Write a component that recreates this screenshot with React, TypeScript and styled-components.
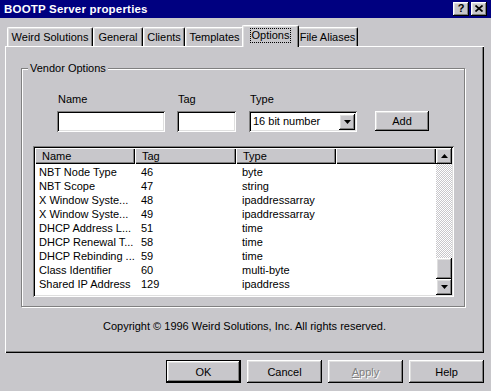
import styled, { createGlobalStyle } from "styled-components";

const FACE = "#c8c7cb";
const LIGHT = "#dfdfdf";
const SHADOW = "#808080";

const GlobalStyle = createGlobalStyle`
  html, body {
    margin: 0;
    padding: 0;
    background: ${FACE};
  }
  * {
    box-sizing: border-box;
  }
`;

const raised = `
  box-shadow: inset -1px -1px #000, inset 1px 1px #fff,
    inset -2px -2px ${SHADOW}, inset 2px 2px ${LIGHT};
`;

const sunken = `
  box-shadow: inset 1px 1px ${SHADOW}, inset -1px -1px #fff,
    inset 2px 2px #000, inset -2px -2px ${LIGHT};
`;

const Window = styled.div`
  width: 491px;
  height: 391px;
  background: ${FACE};
  display: flex;
  flex-direction: column;
  font-family: "Liberation Sans", Arial, sans-serif;
  font-size: 11px;
  color: #000;
  overflow: hidden;
`;

const TitleBar = styled.div`
  height: 18px;
  background: #000080;
  color: #fff;
  display: flex;
  align-items: center;
  padding: 0 4px 0 4px;
  gap: 2px;
`;

const TitleText = styled.div`
  flex: 1;
  font-weight: bold;
  font-size: 11.5px;
  letter-spacing: 0.2px;
`;

const CaptionButton = styled.div`
  width: 16px;
  height: 14px;
  background: ${FACE};
  ${raised}
  display: flex;
  align-items: center;
  justify-content: center;
  color: #000;
  font-weight: bold;
  font-size: 11px;
  line-height: 1;
  padding-bottom: 1px;
`;

const Body = styled.div`
  padding: 7px 0 0 5px;
  display: flex;
  flex-direction: column;
`;

const TabStrip = styled.div`
  height: 21px;
  display: flex;
  align-items: flex-end;
  padding-left: 2px;
  position: relative;
  z-index: 1;
`;

const Tab = styled.div<{ $width: number; $active?: boolean }>`
  width: ${(p) => p.$width + (p.$active ? 4 : 0)}px;
  height: ${(p) => (p.$active ? 22 : 19)}px;
  margin: ${(p) => (p.$active ? "0 -2px -1px" : "0")};
  position: relative;
  z-index: ${(p) => (p.$active ? 2 : 1)};
  background: ${FACE};
  border-top: 1px solid #fff;
  border-left: 1px solid #fff;
  border-right: 1px solid #000;
  border-radius: 2px 2px 0 0;
  box-shadow: inset -1px 0 ${SHADOW}, inset 1px 1px ${LIGHT};
  display: flex;
  align-items: center;
  justify-content: center;
  padding-bottom: ${(p) => (p.$active ? 3 : 0)}px;
  white-space: nowrap;
`;

const FocusLabel = styled.span`
  outline: 1px dotted #000;
  outline-offset: 0;
  padding: 0 1px;
  line-height: 13px;
`;

const TabPanel = styled.div`
  width: 479px;
  height: 307px;
  background: ${FACE};
  box-shadow: inset 1px 1px #fff, inset -1px -1px #000,
    inset -2px -2px ${SHADOW};
  padding-top: 22px;
  display: flex;
  flex-direction: column;
`;

const GroupBox = styled.div`
  position: relative;
  width: 444px;
  height: 239px;
  margin-left: 16px;
  border: 1px solid ${SHADOW};
  box-shadow: inset 1px 1px #fff, 1px 1px #fff;
  padding: 23px 0 0 11px;
`;

const GroupLegend = styled.span`
  position: absolute;
  top: -7px;
  left: 6px;
  padding: 0 2px;
  background: ${FACE};
  line-height: 13px;
`;

const FormGrid = styled.div`
  display: grid;
  grid-template-columns: 108px 60px 108px 54px;
  grid-template-rows: 14px 21px;
  column-gap: 12px;
  row-gap: 5px;
  margin-left: 24px;
`;

const FieldLabel = styled.label`
  line-height: 14px;
  padding-left: 1px;
`;

const TextInput = styled.div<{ $width: number }>`
  width: ${(p) => p.$width}px;
  height: 21px;
  background: #fff;
  ${sunken}
`;

const Select = styled.div`
  height: 21px;
  background: #fff;
  ${sunken}
  display: flex;
  align-items: center;
  padding: 2px 2px 2px 4px;
`;

const SelectValue = styled.span`
  flex: 1;
  line-height: 17px;
`;

const ArrowButton = styled.div<{ $height?: number }>`
  width: 16px;
  height: ${(p) => p.$height ?? 16}px;
  flex: none;
  background: ${FACE};
  ${raised}
  display: flex;
  align-items: center;
  justify-content: center;
`;

const PushButton = styled.button<{ $default?: boolean; $w: number; $h: number }>`
  width: ${(p) => p.$w}px;
  height: ${(p) => p.$h}px;
  margin: 0;
  padding: 0;
  background: ${FACE};
  font-family: inherit;
  font-size: 11px;
  color: #000;
  border: ${(p) => (p.$default ? "1px solid #000" : "none")};
  ${raised}
  &:disabled {
    color: ${SHADOW};
    text-shadow: 1px 1px #fff;
  }
`;

const AddButton = styled(PushButton)`
  margin-left: 6px;
`;

const ListView = styled.div`
  margin-top: 14px;
  width: 421px;
  height: 151px;
  background: #fff;
  ${sunken}
  padding: 2px;
  display: flex;
`;

const ListMain = styled.div`
  flex: 1;
  display: flex;
  flex-direction: column;
`;

const columns = "100px 101px 100px 1fr";

const HeaderRow = styled.div`
  display: grid;
  grid-template-columns: ${columns};
  height: 16px;
  margin-bottom: 1px;
`;

const HeaderCell = styled.div`
  background: ${FACE};
  box-shadow: inset 1px 1px #fff, inset -1px -1px #000,
    inset -2px -2px ${SHADOW};
  line-height: 16px;
  padding-left: 7px;
`;

const Row = styled.div`
  display: grid;
  grid-template-columns: ${columns};
  height: 14px;
  line-height: 14px;
  white-space: nowrap;
`;

const Cell = styled.div<{ $first?: boolean }>`
  padding-left: ${(p) => (p.$first ? 4 : 6)}px;
  overflow: hidden;
`;

const ScrollBar = styled.div`
  width: 16px;
  display: flex;
  flex-direction: column;
`;

const Track = styled.div`
  flex: 1;
  background-color: #fff;
  background-image: conic-gradient(
    ${FACE} 25%,
    #fff 0 50%,
    ${FACE} 0 75%,
    #fff 0
  );
  background-size: 2px 2px;
`;

const Thumb = styled.div`
  height: 21px;
  background: ${FACE};
  ${raised}
`;

const Copyright = styled.div`
  margin-top: 13px;
  text-align: center;
  line-height: 13px;
`;

const ButtonRow = styled.div`
  display: flex;
  justify-content: flex-end;
  gap: 6px;
  margin-top: 7px;
  padding-right: 7px;
`;

const Mnemonic = styled.span`
  text-decoration: underline;
`;

const Arrow = ({ up }: { up?: boolean }) => (
  <svg width="7" height="4" viewBox="0 0 7 4">
    <polygon points={up ? "3.5,0 7,4 0,4" : "0,0 7,0 3.5,4"} fill="#000" />
  </svg>
);

const CloseGlyph = () => (
  <svg width="8" height="7" viewBox="0 0 8 7">
    <path d="M0.5 0.5 L7.5 6.5 M7.5 0.5 L0.5 6.5" stroke="#000" strokeWidth="1.7" />
  </svg>
);

const tabs = [
  { label: "Weird Solutions", width: 86 },
  { label: "General", width: 50 },
  { label: "Clients", width: 42 },
  { label: "Templates", width: 59 },
  { label: "Options", width: 53, active: true },
  { label: "File Aliases", width: 61 },
];

const options = [
  ["NBT Node Type", "46", "byte"],
  ["NBT Scope", "47", "string"],
  ["X Window Syste...", "48", "ipaddressarray"],
  ["X Window Syste...", "49", "ipaddressarray"],
  ["DHCP Address L...", "51", "time"],
  ["DHCP Renewal T...", "58", "time"],
  ["DHCP Rebinding ...", "59", "time"],
  ["Class Identifier", "60", "multi-byte"],
  ["Shared IP Address", "129", "ipaddress"],
];

export default function App() {
  return (
    <>
      <GlobalStyle />
      <Window>
        <TitleBar>
          <TitleText>BOOTP Server properties</TitleText>
          <CaptionButton>?</CaptionButton>
          <CaptionButton>
            <CloseGlyph />
          </CaptionButton>
        </TitleBar>
        <Body>
          <TabStrip>
            {tabs.map((t) => (
              <Tab key={t.label} $width={t.width} $active={t.active}>
                {t.active ? <FocusLabel>{t.label}</FocusLabel> : t.label}
              </Tab>
            ))}
          </TabStrip>
          <TabPanel>
            <GroupBox>
              <GroupLegend>Vendor Options</GroupLegend>
              <FormGrid>
                <FieldLabel>Name</FieldLabel>
                <FieldLabel>Tag</FieldLabel>
                <FieldLabel>Type</FieldLabel>
                <span />
                <TextInput $width={108} />
                <TextInput $width={59} />
                <Select>
                  <SelectValue>16 bit number</SelectValue>
                  <ArrowButton>
                    <Arrow />
                  </ArrowButton>
                </Select>
                <AddButton $w={54} $h={20}>
                  Add
                </AddButton>
              </FormGrid>
              <ListView>
                <ListMain>
                  <HeaderRow>
                    <HeaderCell>Name</HeaderCell>
                    <HeaderCell>Tag</HeaderCell>
                    <HeaderCell>Type</HeaderCell>
                    <HeaderCell />
                  </HeaderRow>
                  {options.map(([name, tag, type]) => (
                    <Row key={tag}>
                      <Cell $first>{name}</Cell>
                      <Cell>{tag}</Cell>
                      <Cell>{type}</Cell>
                    </Row>
                  ))}
                </ListMain>
                <ScrollBar>
                  <ArrowButton>
                    <Arrow up />
                  </ArrowButton>
                  <Track />
                  <Thumb />
                  <ArrowButton>
                    <Arrow />
                  </ArrowButton>
                </ScrollBar>
              </ListView>
            </GroupBox>
            <Copyright>
              Copyright © 1996 Weird Solutions, Inc. All rights reserved.
            </Copyright>
          </TabPanel>
          <ButtonRow>
            <PushButton $default $w={75} $h={23}>
              OK
            </PushButton>
            <PushButton $w={75} $h={23}>
              Cancel
            </PushButton>
            <PushButton disabled $w={75} $h={23}>
              <Mnemonic>A</Mnemonic>pply
            </PushButton>
            <PushButton $w={75} $h={23}>
              Help
            </PushButton>
          </ButtonRow>
        </Body>
      </Window>
    </>
  );
}
